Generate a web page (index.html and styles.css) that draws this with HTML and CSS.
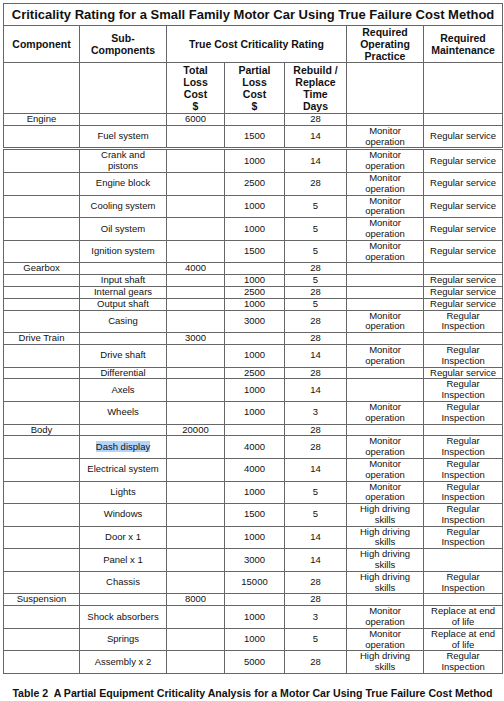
FILE: index.html
```html
<!DOCTYPE html>
<html>
<head>
<meta charset="utf-8">
<link rel="stylesheet" href="styles.css">
</head>
<body>
<div class="page">
<table class="crit">
<colgroup>
<col class="c-comp"><col class="c-sub"><col class="c-total"><col class="c-part"><col class="c-days"><col class="c-op"><col class="c-maint">
</colgroup>
<thead>
<tr class="title-row"><th colspan="7">Criticality Rating for a Small Family Motor Car Using True Failure Cost Method</th></tr>
<tr class="head1">
<th>Component</th>
<th>Sub-<br>Components</th>
<th colspan="3">True Cost Criticality Rating</th>
<th>Required<br>Operating<br>Practice</th>
<th>Required<br>Maintenance</th>
</tr>
<tr class="head2">
<th></th>
<th></th>
<th>Total<br>Loss<br>Cost<br>$</th>
<th>Partial<br>Loss<br>Cost<br>$</th>
<th>Rebuild /<br>Replace<br>Time<br>Days</th>
<th></th>
<th></th>
</tr>
</thead>
<tbody>
<tr><td>Engine</td><td></td><td>6000</td><td></td><td>28</td><td></td><td></td></tr>
<tr><td></td><td>Fuel system</td><td></td><td>1500</td><td>14</td><td>Monitor<br>operation</td><td>Regular service</td></tr>
<tr class="dbl"><td></td><td>Crank and<br>pistons</td><td></td><td>1000</td><td>14</td><td>Monitor<br>operation</td><td>Regular service</td></tr>
<tr><td></td><td>Engine block</td><td></td><td>2500</td><td>28</td><td>Monitor<br>operation</td><td>Regular service</td></tr>
<tr><td></td><td>Cooling system</td><td></td><td>1000</td><td>5</td><td>Monitor<br>operation</td><td>Regular service</td></tr>
<tr><td></td><td>Oil system</td><td></td><td>1000</td><td>5</td><td>Monitor<br>operation</td><td>Regular service</td></tr>
<tr><td></td><td>Ignition system</td><td></td><td>1500</td><td>5</td><td>Monitor<br>operation</td><td>Regular service</td></tr>
<tr><td>Gearbox</td><td></td><td>4000</td><td></td><td>28</td><td></td><td></td></tr>
<tr><td></td><td>Input shaft</td><td></td><td>1000</td><td>5</td><td></td><td>Regular service</td></tr>
<tr><td></td><td>Internal gears</td><td></td><td>2500</td><td>28</td><td></td><td>Regular service</td></tr>
<tr><td></td><td>Output shaft</td><td></td><td>1000</td><td>5</td><td></td><td>Regular service</td></tr>
<tr><td></td><td>Casing</td><td></td><td>3000</td><td>28</td><td>Monitor<br>operation</td><td>Regular<br>Inspection</td></tr>
<tr><td>Drive Train</td><td></td><td>3000</td><td></td><td>28</td><td></td><td></td></tr>
<tr><td></td><td>Drive shaft</td><td></td><td>1000</td><td>14</td><td>Monitor<br>operation</td><td>Regular<br>Inspection</td></tr>
<tr><td></td><td>Differential</td><td></td><td>2500</td><td>28</td><td></td><td>Regular service</td></tr>
<tr><td></td><td>Axels</td><td></td><td>1000</td><td>14</td><td></td><td>Regular<br>Inspection</td></tr>
<tr><td></td><td>Wheels</td><td></td><td>1000</td><td>3</td><td>Monitor<br>operation</td><td>Regular<br>Inspection</td></tr>
<tr><td>Body</td><td></td><td>20000</td><td></td><td>28</td><td></td><td></td></tr>
<tr><td></td><td><span class="sel">Dash display</span></td><td></td><td>4000</td><td>28</td><td>Monitor<br>operation</td><td>Regular<br>Inspection</td></tr>
<tr><td></td><td>Electrical system</td><td></td><td>4000</td><td>14</td><td>Monitor<br>operation</td><td>Regular<br>Inspection</td></tr>
<tr><td></td><td>Lights</td><td></td><td>1000</td><td>5</td><td>Monitor<br>operation</td><td>Regular<br>Inspection</td></tr>
<tr><td></td><td>Windows</td><td></td><td>1500</td><td>5</td><td>High driving<br>skills</td><td>Regular<br>Inspection</td></tr>
<tr><td></td><td>Door x 1</td><td></td><td>1000</td><td>14</td><td>High driving<br>skills</td><td>Regular<br>Inspection</td></tr>
<tr><td></td><td>Panel x 1</td><td></td><td>3000</td><td>14</td><td>High driving<br>skills</td><td></td></tr>
<tr><td></td><td>Chassis</td><td></td><td>15000</td><td>28</td><td>High driving<br>skills</td><td>Regular<br>Inspection</td></tr>
<tr><td>Suspension</td><td></td><td>8000</td><td></td><td>28</td><td></td><td></td></tr>
<tr><td></td><td>Shock absorbers</td><td></td><td>1000</td><td>3</td><td>Monitor<br>operation</td><td>Replace at end<br>of life</td></tr>
<tr><td></td><td>Springs</td><td></td><td>1000</td><td>5</td><td>Monitor<br>operation</td><td>Replace at end<br>of life</td></tr>
<tr><td></td><td>Assembly x 2</td><td></td><td>5000</td><td>28</td><td>High driving<br>skills</td><td>Regular<br>Inspection</td></tr>
</tbody>
</table>
<p class="caption">Table 2&nbsp; A Partial Equipment Criticality Analysis for a Motor Car Using True Failure Cost Method</p>
</div>
</body>
</html>
```

FILE: styles.css
```css
html, body {
  margin: 0;
  padding: 0;
  background: #ffffff;
}

.page {
  padding: 3px 0 0 3px;
  font-family: "Liberation Sans", Arial, sans-serif;
  color: #111111;
}

.crit {
  border-collapse: collapse;
  table-layout: fixed;
  width: 499px;
}

.c-comp { width: 76px; }
.c-sub { width: 87px; }
.c-total { width: 58px; }
.c-part { width: 60px; }
.c-days { width: 62px; }
.c-op { width: 77px; }
.c-maint { width: 79px; }

.crit th,
.crit td {
  border: 1px solid #666666;
  padding: 0;
  text-align: center;
  vertical-align: middle;
  white-space: nowrap;
}

.crit th {
  font-weight: bold;
  font-size: 10.5px;
  line-height: 12px;
}

.title-row th {
  font-size: 13px;
  line-height: 21px;
}

.head2 th {
  padding: 1px 0;
}

.crit td {
  font-size: 9.5px;
  line-height: 10.8px;
}

.crit tr.dbl td {
  border-top: 3px double #666666;
}

.sel {
  background: #b3d4fb;
}

.caption {
  margin: 13px 0 0 0;
  font-weight: bold;
  font-size: 10.6px;
  line-height: 13px;
  text-align: center;
  width: 499px;
  white-space: nowrap;
}
```
